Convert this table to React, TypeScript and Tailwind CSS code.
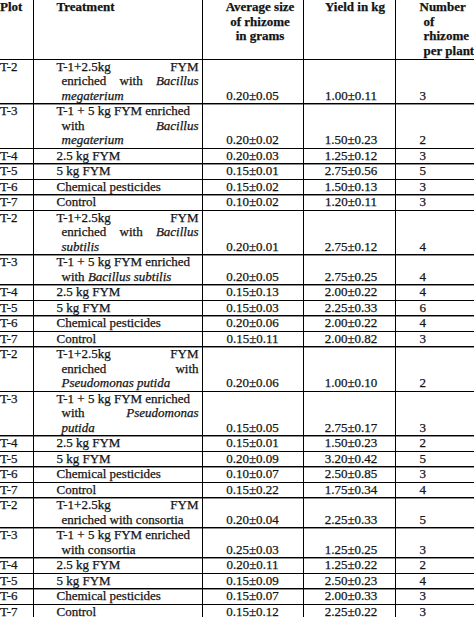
import React from 'react';

type Part = string | { i: string };

interface Line {
  parts: Part[];
  justify?: boolean;
}

interface Row {
  plot: string;
  lines: Line[];
  avg: string;
  yld: string;
  n: string;
}

const I = (t: string): Part => ({ i: t });
const J = (...parts: Part[]): Line => ({ parts, justify: true });
const L = (...parts: Part[]): Line => ({ parts });

function single(plot: string, text: string, avg: string, yld: string, n: string): Row {
  return { plot, lines: [L(text)], avg, yld, n };
}

const rows: Row[] = [
  // Bacillus megaterium
  {
    plot: 'T-2',
    lines: [J('T-1+2.5kg', 'FYM'), J('enriched', 'with', I('Bacillus')), L(I('megaterium'))],
    avg: '0.20±0.05',
    yld: '1.00±0.11',
    n: '3',
  },
  {
    plot: 'T-3',
    lines: [L('T-1 + 5 kg FYM enriched'), J('with', I('Bacillus')), L(I('megaterium'))],
    avg: '0.20±0.02',
    yld: '1.50±0.23',
    n: '2',
  },
  single('T-4', '2.5 kg FYM', '0.20±0.03', '1.25±0.12', '3'),
  single('T-5', '5 kg FYM', '0.15±0.01', '2.75±0.56', '5'),
  single('T-6', 'Chemical pesticides', '0.15±0.02', '1.50±0.13', '3'),
  single('T-7', 'Control', '0.10±0.02', '1.20±0.11', '3'),
  // Bacillus subtilis
  {
    plot: 'T-2',
    lines: [J('T-1+2.5kg', 'FYM'), J('enriched', 'with', I('Bacillus')), L(I('subtilis'))],
    avg: '0.20±0.01',
    yld: '2.75±0.12',
    n: '4',
  },
  {
    plot: 'T-3',
    lines: [L('T-1 + 5 kg FYM enriched'), L('with ', I('Bacillus subtilis'))],
    avg: '0.20±0.05',
    yld: '2.75±0.25',
    n: '4',
  },
  single('T-4', '2.5 kg FYM', '0.15±0.13', '2.00±0.22', '4'),
  single('T-5', '5 kg FYM', '0.15±0.03', '2.25±0.33', '6'),
  single('T-6', 'Chemical pesticides', '0.20±0.06', '2.00±0.22', '4'),
  single('T-7', 'Control', '0.15±0.11', '2.00±0.82', '3'),
  // Pseudomonas putida
  {
    plot: 'T-2',
    lines: [J('T-1+2.5kg', 'FYM'), J('enriched', 'with'), L(I('Pseudomonas putida'))],
    avg: '0.20±0.06',
    yld: '1.00±0.10',
    n: '2',
  },
  {
    plot: 'T-3',
    lines: [L('T-1 + 5 kg FYM enriched'), J('with', I('Pseudomonas')), L(I('putida'))],
    avg: '0.15±0.05',
    yld: '2.75±0.17',
    n: '3',
  },
  single('T-4', '2.5 kg FYM', '0.15±0.01', '1.50±0.23', '2'),
  single('T-5', '5 kg FYM', '0.20±0.09', '3.20±0.42', '5'),
  single('T-6', 'Chemical pesticides', '0.10±0.07', '2.50±0.85', '3'),
  single('T-7', 'Control', '0.15±0.22', '1.75±0.34', '4'),
  // consortia
  {
    plot: 'T-2',
    lines: [J('T-1+2.5kg', 'FYM'), L('enriched with consortia')],
    avg: '0.20±0.04',
    yld: '2.25±0.33',
    n: '5',
  },
  {
    plot: 'T-3',
    lines: [L('T-1 + 5 kg FYM enriched'), L('with consortia')],
    avg: '0.25±0.03',
    yld: '1.25±0.25',
    n: '3',
  },
  single('T-4', '2.5 kg FYM', '0.20±0.11', '1.25±0.22', '2'),
  single('T-5', '5 kg FYM', '0.15±0.09', '2.50±0.23', '4'),
  single('T-6', 'Chemical pesticides', '0.15±0.07', '2.00±0.33', '3'),
  single('T-7', 'Control', '0.15±0.12', '2.25±0.22', '3'),
];

function PartText({ part }: { part: Part }) {
  if (typeof part === 'string') return <span className="whitespace-pre">{part}</span>;
  return <span className="italic whitespace-pre">{part.i}</span>;
}

function TreatmentCell({ lines }: { lines: Line[] }) {
  return (
    <div className="pr-[3px]">
      {lines.map((line, idx) => (
        <div
          key={idx}
          className={`${idx === 0 ? 'pl-[23px]' : 'pl-[28px]'} ${line.justify ? 'flex justify-between' : ''}`}
        >
          {line.parts.map((p, k) => (
            <PartText key={k} part={p} />
          ))}
        </div>
      ))}
    </div>
  );
}

const cell = 'p-0 border-r border-b border-black shadow-[0_1px_0_rgba(0,0,0,0.45)]';

export default function App() {
  return (
    <div className="w-[474px] h-[617px] overflow-hidden bg-white text-[#141414]">
      <table
        className="table-fixed border-collapse w-[490px] text-[13px] leading-[14.5px] [-webkit-text-stroke:0.25px_#141414]"
        style={{ fontFamily: '"Liberation Serif", "Times New Roman", serif' }}
      >
        <colgroup>
          <col className="w-[33px]" />
          <col className="w-[169px]" />
          <col className="w-[101px]" />
          <col className="w-[92px]" />
          <col className="w-[95px]" />
        </colgroup>
        <thead>
          <tr className="font-bold align-top h-[59px]">
            <th className={`${cell} text-left`}>Plot</th>
            <th className={`${cell} text-left pl-[23px]`}>Treatment</th>
            <th className={`${cell} text-center pl-[15px]`}>
              <div>Average size</div>
              <div>of rhizome</div>
              <div>in grams</div>
            </th>
            <th className={`${cell} text-center pl-[12px]`}>Yield in kg</th>
            <th className={`${cell} border-r-0 text-left pl-[24px]`}>
              <div>Number</div>
              <div className="pl-[4px]">of</div>
              <div className="pl-[4px]">rhizome</div>
              <div className="pl-[4px] whitespace-nowrap">per plant</div>
            </th>
          </tr>
        </thead>
        <tbody>
          {rows.map((r, idx) => (
            <tr key={idx}>
              <td className={`${cell} align-top`}>{r.plot}</td>
              <td className={`${cell} align-top`}>
                <TreatmentCell lines={r.lines} />
              </td>
              <td className={`${cell} align-bottom text-center`}>{r.avg}</td>
              <td className={`${cell} align-bottom text-center pl-[4px]`}>{r.yld}</td>
              <td className={`${cell} border-r-0 align-bottom pl-[24px]`}>{r.n}</td>
            </tr>
          ))}
        </tbody>
      </table>
    </div>
  );
}
